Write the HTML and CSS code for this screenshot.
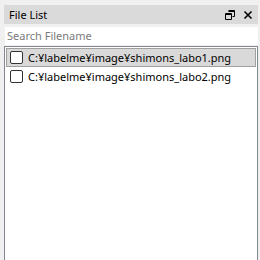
FILE: index.html
```html
<!DOCTYPE html>
<html>
<head>
<meta charset="utf-8">
<link rel="stylesheet" href="styles.css">
</head>
<body>
<div class="dock">
  <div class="titlebar">
    <span class="title">File List</span>
    <span class="btns">
      <svg class="ico" width="10" height="10" viewBox="0 0 10 10"><path d="M3.5 0.5h6v6h-2M0.5 3.5h6v6h-6z M3.5 1.5h6 M0.5 4.5h6" fill="none" stroke="#000" stroke-width="1"/></svg>
      <svg class="ico" width="10" height="10" viewBox="0 0 10 10"><path d="M1.5 1.5l7 7M8.5 1.5l-7 7" fill="none" stroke="#000" stroke-width="1.6"/></svg>
    </span>
  </div>
  <div class="search">Search Filename</div>
  <div class="list">
    <div class="item sel"><span class="cb"></span><span class="name">C:¥labelme¥image¥shimons_labo1.png</span></div>
    <div class="item"><span class="cb"></span><span class="name">C:¥labelme¥image¥shimons_labo2.png</span></div>
  </div>
</div>
</body>
</html>
```
FILE: styles.css
```css
html, body { margin: 0; padding: 0; }
body {
  width: 260px; height: 260px; background: #f0f0f0;
  font-family: "Noto Sans", "Open Sans", sans-serif; font-size: 11px; color: #000;
  overflow: hidden;
}
.dock { display: flex; flex-direction: column; height: 260px; padding: 5px 2px 0 4px; box-sizing: border-box; }
.titlebar {
  height: 19px; background: #dadada; display: flex; align-items: center;
  justify-content: space-between; padding: 0 5px 0 5px;
}
.title { font-size: 11px; }
.btns { display: flex; gap: 8px; align-items: center; }
.ico { display: block; }
.search {
  margin-top: 3px; height: 18px; background: #fff; color: #7a7a7a; line-height: 18px;
  padding-left: 2px; margin-left: 1px;
}
.list {
  margin-top: 1px; flex: 1; background: #fff; border: 1px solid #828790; border-bottom: none;
  padding: 1px;
}
.item { height: 17px; display: flex; align-items: center; padding-left: 3px; border: 1px solid transparent; }
.item.sel { background: #d9d9d9; border-color: #a0a0a0; }
.cb { width: 11px; height: 11px; border: 1px solid #333; border-radius: 2px; background: #fff; margin-right: 5px; }
.name { white-space: nowrap; }
```
